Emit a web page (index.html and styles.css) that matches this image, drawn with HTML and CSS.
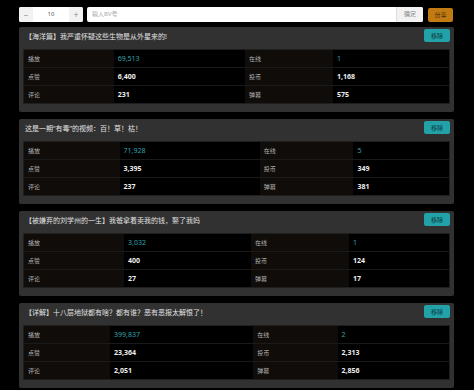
FILE: index.html
```html
<!DOCTYPE html>
<html>
<head>
  <meta charset="UTF-8">
  <title>视频数据</title>
  <link rel="stylesheet" href="styles.css">
</head>
<body>
  <div class="page">
    <div class="toolbar">
      <div class="num-input">
        <span class="num-btn">&minus;</span>
        <span class="num-value">10</span>
        <span class="num-btn">+</span>
      </div>
      <div class="bv-input">
        <span class="placeholder">输入BV号</span>
        <span class="confirm">确定</span>
      </div>
      <button class="share-btn">分享</button>
    </div>

    <div class="card">
      <div class="card-head">
        <span class="card-title">【海洋篇】我严重怀疑这些生物是从外星来的!</span>
        <button class="remove-btn">移除</button>
      </div>
      <table class="stats">
        <tr><td class="label">播放</td><td class="value link">69,513</td><td class="label">在线</td><td class="value link">1</td></tr>
        <tr><td class="label">点赞</td><td class="value">6,400</td><td class="label">投币</td><td class="value">1,168</td></tr>
        <tr><td class="label">评论</td><td class="value">231</td><td class="label">弹幕</td><td class="value">575</td></tr>
      </table>
    </div>

    <div class="card">
      <div class="card-head">
        <span class="card-title">这是一期“有毒”的视频：百！草！枯！</span>
        <button class="remove-btn">移除</button>
      </div>
      <table class="stats">
        <tr><td class="label">播放</td><td class="value link">71,928</td><td class="label">在线</td><td class="value link">5</td></tr>
        <tr><td class="label">点赞</td><td class="value">3,395</td><td class="label">投币</td><td class="value">349</td></tr>
        <tr><td class="label">评论</td><td class="value">237</td><td class="label">弹幕</td><td class="value">381</td></tr>
      </table>
    </div>

    <div class="card">
      <div class="card-head">
        <span class="card-title">【被嫌弃的刘学州的一生】我爸拿着卖我的钱，娶了我妈</span>
        <button class="remove-btn">移除</button>
      </div>
      <table class="stats">
        <tr><td class="label">播放</td><td class="value link">3,032</td><td class="label">在线</td><td class="value link">1</td></tr>
        <tr><td class="label">点赞</td><td class="value">400</td><td class="label">投币</td><td class="value">124</td></tr>
        <tr><td class="label">评论</td><td class="value">27</td><td class="label">弹幕</td><td class="value">17</td></tr>
      </table>
    </div>

    <div class="card">
      <div class="card-head">
        <span class="card-title">【详解】十八层地狱都有啥？都有谁？恶有恶报太解恨了！</span>
        <button class="remove-btn">移除</button>
      </div>
      <table class="stats">
        <tr><td class="label">播放</td><td class="value link">399,837</td><td class="label">在线</td><td class="value link">2</td></tr>
        <tr><td class="label">点赞</td><td class="value">23,364</td><td class="label">投币</td><td class="value">2,313</td></tr>
        <tr><td class="label">评论</td><td class="value">2,051</td><td class="label">弹幕</td><td class="value">2,856</td></tr>
      </table>
    </div>
  </div>
</body>
</html>
```

FILE: styles.css
```css
body {
  margin: 0;
  background-color: #000;
  font-family: "Noto Sans", "Noto Sans CJK SC", sans-serif;
  color: #ddd;
}

.page {
  width: 435px;
  padding: 7px 0 0 19px;
}

.toolbar {
  display: flex;
  align-items: center;
  height: 15px;
  margin-bottom: 5px;
}

.num-input {
  display: flex;
  width: 64px;
  height: 15px;
  background-color: #fff;
  border-radius: 2px;
  overflow: hidden;
}

.num-btn {
  width: 14px;
  background-color: #f2f2f2;
  color: #888;
  font-size: 8px;
  line-height: 15px;
  text-align: center;
}

.num-value {
  flex: 1;
  text-align: center;
  font-size: 6px;
  line-height: 15px;
  color: #555;
}

.bv-input {
  display: flex;
  justify-content: space-between;
  width: 336px;
  height: 15px;
  margin-left: 4px;
  background-color: #fff;
  border-radius: 2px;
  overflow: hidden;
}

.placeholder {
  padding-left: 5px;
  font-size: 6px;
  line-height: 15px;
  color: #aaa;
}

.confirm {
  width: 26px;
  background-color: #f2f2f2;
  border-left: 1px solid #ddd;
  font-size: 6px;
  line-height: 15px;
  text-align: center;
  color: #888;
}

.share-btn {
  width: 25px;
  height: 14px;
  margin-left: 5px;
  padding: 0;
  border: none;
  border-radius: 2px;
  background-color: #c27a12;
  color: #3a2406;
  font-family: inherit;
  font-size: 6px;
}

.card {
  background-color: #313131;
  border-radius: 2px;
  padding: 2px 4px 8px;
  margin-bottom: 7px;
}

.card-head {
  display: flex;
  justify-content: space-between;
  align-items: center;
  padding-left: 2px;
  margin-bottom: 7px;
}

.card-title {
  font-size: 7px;
  color: #e0e0e0;
}

.remove-btn {
  width: 26px;
  height: 13px;
  padding: 0;
  border: none;
  border-radius: 2px;
  background-color: #22a1a8;
  color: #0c3a3d;
  font-family: inherit;
  font-size: 6px;
}

.stats {
  width: 100%;
  border-collapse: collapse;
  background-color: #000;
  border: 1px solid #1f1f1f;
}

.stats td {
  height: 17px;
  padding: 0 4px;
  border-bottom: 1px solid #1a1a1a;
}

.stats tr:last-child td {
  border-bottom: none;
}

.label {
  background-color: #0f0c09;
  color: #b5b5b5;
  font-size: 6px;
}

.value {
  color: #eee;
  font-size: 7px;
  font-weight: bold;
}

.value.link {
  color: #36a3ab;
  font-weight: normal;
}
```
